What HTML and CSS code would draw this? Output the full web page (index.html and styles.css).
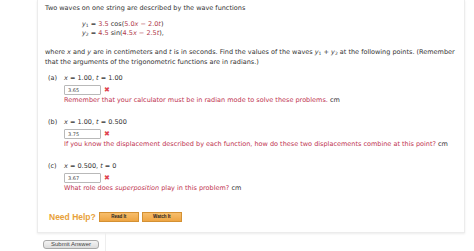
FILE: index.html
```html
<!DOCTYPE html>
<html>
<head>
<meta charset="utf-8">
<link rel="stylesheet" href="styles.css">
</head>
<body>
<div class="panel">
  <p class="intro">Two waves on one string are described by the wave functions</p>
  <div class="eqs">
    <div class="eq"><i>y</i><sub>1</sub> = <span class="num">3.5</span> cos(<span class="num">5.0<i>x</i> − 2.0<i>t</i></span>)</div>
    <div class="eq"><i>y</i><sub>2</sub> = <span class="num">4.5</span> sin(<span class="num">4.5<i>x</i> − 2.5<i>t</i></span>),</div>
  </div>
  <div class="where">
    <div class="line">where <i>x</i> and <i>y</i> are in centimeters and <i>t</i> is in seconds. Find the values of the waves <i>y</i><sub>1</sub> + <i>y</i><sub>2</sub> at the following points. (Remember</div>
    <div class="line">that the arguments of the trigonometric functions are in radians.)</div>
  </div>

  <div class="part first">
    <div class="q"><span class="lbl">(a)</span><span><i>x</i> = 1.00, <i>t</i> = 1.00</span></div>
    <div class="ans"><span class="box">3.65</span><span class="xmark">✖</span></div>
    <div class="hint"><span class="red">Remember that your calculator must be in radian mode to solve these problems.</span> cm</div>
  </div>
  <div class="part">
    <div class="q"><span class="lbl">(b)</span><span><i>x</i> = 1.00, <i>t</i> = 0.500</span></div>
    <div class="ans"><span class="box">3.75</span><span class="xmark">✖</span></div>
    <div class="hint"><span class="red">If you know the displacement described by each function, how do these two displacements combine at this point?</span> cm</div>
  </div>
  <div class="part">
    <div class="q"><span class="lbl">(c)</span><span><i>x</i> = 0.500, <i>t</i> = 0</span></div>
    <div class="ans"><span class="box">3.67</span><span class="xmark">✖</span></div>
    <div class="hint"><span class="red">What role does <i>superposition</i> play in this problem?</span> cm</div>
  </div>

  <div class="help">
    <span class="needhelp">Need Help?</span>
    <span class="hbtn">Read It</span>
    <span class="hbtn">Watch It</span>
  </div>
</div>
<div class="footer">
  <span class="submit">Submit Answer</span>
  <div class="rest"></div>
</div>
</body>
</html>
```

FILE: styles.css
```css
html, body {
  margin: 0;
  padding: 0;
  background: #ffffff;
}
body {
  font-family: "DejaVu Sans", Verdana, sans-serif;
  font-size: 6.5px;
  color: #333333;
  width: 474px;
  height: 251px;
  overflow: hidden;
}
.panel {
  margin-left: 37px;
  width: 428px;
  height: 233px;
  box-sizing: border-box;
  border: 1px solid #ececec;
  border-top: none;
  box-shadow: 0 1px 2px rgba(0,0,0,0.08);
  padding: 3px 0 0 7px;
}
p { margin: 0; }
.intro { line-height: 10px; }
.eqs {
  margin-top: 7px;
  padding-left: 37px;
}
.eq { line-height: 9px; }
sub {
  font-size: 4.5px;
  vertical-align: -1px;
  line-height: 0;
}
.num { color: #b0394a; }
.where {
  margin-top: 9px;
  line-height: 10px;
}
.line { white-space: nowrap; }
.part { margin-top: 12px; }
.part.first { margin-top: 6px; }
.q {
  line-height: 10px;
  padding-left: 3px;
  display: flex;
}
.lbl { width: 16px; }
.ans {
  margin-top: 2px;
  padding-left: 19px;
  display: flex;
  align-items: center;
  height: 10px;
}
.box {
  box-sizing: border-box;
  width: 37px;
  height: 10px;
  border: 1px solid #b9b9b9;
  border-radius: 1px;
  font-size: 5px;
  line-height: 8px;
  padding-left: 3px;
  color: #444;
}
.xmark {
  color: #e0444e;
  font-size: 7px;
  margin-left: 3px;
  font-weight: bold;
}
.hint {
  padding-left: 19px;
  line-height: 10px;
  margin-top: 0;
}
.red { color: #c0334f; }
.help {
  margin-top: 19px;
  padding-left: 4px;
  display: flex;
  align-items: center;
  height: 10px;
}
.needhelp {
  font-family: "Liberation Sans", Arial, sans-serif;
  font-size: 8.5px;
  font-weight: bold;
  color: #e8a13a;
  margin-right: 3px;
}
.hbtn {
  box-sizing: border-box;
  width: 40px;
  height: 10px;
  margin-right: 3px;
  background: linear-gradient(#f7be6c, #eea543);
  border: 1px solid #d49133;
  font-family: "Liberation Sans", Arial, sans-serif;
  font-size: 4.5px;
  font-weight: bold;
  color: #222;
  text-align: center;
  line-height: 8px;
}
.footer {
  display: flex;
  height: 18px;
}
.submit {
  margin: 7px 0 0 43px;
  box-sizing: border-box;
  width: 56px;
  height: 9px;
  border: 1px solid #a9a9a9;
  border-radius: 3px;
  background: linear-gradient(#f4f4f4, #dcdcdc);
  font-family: "Liberation Sans", Arial, sans-serif;
  font-size: 6px;
  color: #444;
  text-align: center;
  line-height: 7px;
}
.rest {
  margin-left: 6px;
  border-left: 1px solid #eeeeee;
  flex: 1;
}
```
